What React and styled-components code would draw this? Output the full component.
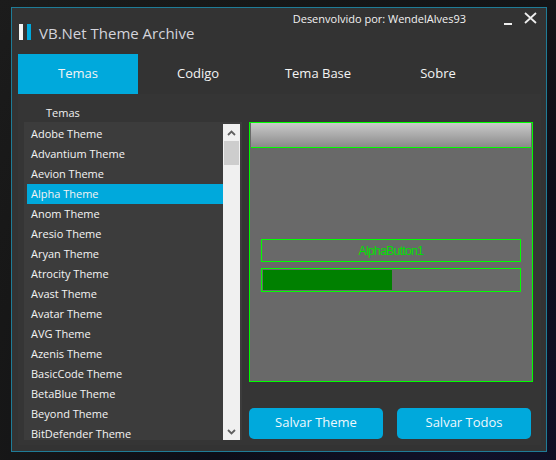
import React from 'react';
import styled, { createGlobalStyle } from 'styled-components';

const GlobalStyle = createGlobalStyle`
  html, body {
    margin: 0;
    padding: 0;
  }
  body {
    width: 556px;
    height: 460px;
    overflow: hidden;
    background: radial-gradient(circle at 85% 95%, #10112a 0%, #0c0d18 40%, #171717 75%, #1c1c1c 100%);
    font-family: "Open Sans", "Noto Sans", sans-serif;
  }
`;

const Desktop = styled.div`
  width: 556px;
  height: 460px;
  padding: 7px 0 0 11px;
  box-sizing: border-box;
`;

const Window = styled.div`
  width: 536px;
  height: 445px;
  box-sizing: border-box;
  border: 1px solid #1f7c97;
  background: #333333;
  display: flex;
  flex-direction: column;
`;

const TitleBar = styled.div`
  height: 46px;
  display: flex;
  align-items: flex-start;
  padding: 0 9px 0 7px;
`;

const Brand = styled.div`
  flex: 1;
  display: flex;
  align-items: center;
  margin-top: 15px;
  height: 18px;
`;

const Bar = styled.span`
  width: 4px;
  height: 16px;
  background: ${p => p.$color};
  margin-right: ${p => p.$gap}px;
`;

const Title = styled.span`
  color: #d4d4dc;
  font-size: 15px;
  letter-spacing: 0;
  margin-left: 3px;
  position: relative;
  top: 1px;
`;

const Credit = styled.span`
  color: #f2f2f2;
  font-size: 11px;
  margin-top: 3px;
  letter-spacing: 0;
`;

const Controls = styled.div`
  display: flex;
  align-items: flex-start;
  margin-left: 38px;
  margin-top: 4px;
  gap: 12px;
`;

const Minimize = styled.span`
  width: 8px;
  height: 2px;
  background: #eeeeee;
  margin-top: 11px;
`;

const TabRow = styled.div`
  display: flex;
  height: 40px;
  padding-left: 6px;
`;

const Tab = styled.div`
  width: 120px;
  display: flex;
  align-items: center;
  justify-content: center;
  padding-bottom: 3px;
  box-sizing: border-box;
  font-size: 13px;
  color: #f4f4f4;
  background: ${p => (p.$active ? '#00a9dc' : 'transparent')};
`;

const TabPage = styled.div`
  margin: 0 5px 6px 6px;
  flex: 1;
  background: #353535;
  display: flex;
  padding: 0 8px 0 6px;
  gap: 7px;
`;

const LeftColumn = styled.div`
  display: flex;
  flex-direction: column;
`;

const Label = styled.div`
  height: 28px;
  box-sizing: border-box;
  padding: 12px 0 0 22px;
  font-size: 11px;
  color: #f0f0f0;
  line-height: 14px;
`;

const ListBox = styled.div`
  width: 218px;
  height: 318px;
  background: #3c3c3c;
  display: flex;
  overflow: hidden;
`;

const Items = styled.div`
  flex: 1;
  padding: 2px 0 0 3px;
`;

const Item = styled.div`
  height: 20px;
  line-height: 19px;
  padding-left: 4px;
  font-size: 11px;
  color: #f4f4f4;
  white-space: nowrap;
  background: ${p => (p.$selected ? '#00a9dc' : 'transparent')};
`;

const ScrollTrack = styled.div`
  width: 17px;
  margin: 2px 2px 0 0;
  background: #f0f0f0;
  display: flex;
  flex-direction: column;
  align-items: center;
`;

const ScrollArrow = styled.div`
  height: 17px;
  display: flex;
  align-items: center;
  justify-content: center;
`;

const Thumb = styled.div`
  width: 15px;
  height: 24px;
  background: #cdcdcd;
`;

const Spacer = styled.div`
  flex: 1;
`;

const RightColumn = styled.div`
  display: flex;
  flex-direction: column;
  padding-top: 28px;
`;

const Panel = styled.div`
  width: 284px;
  height: 260px;
  box-sizing: border-box;
  border: 1px solid #00ff00;
  background: #696969;
  display: flex;
  flex-direction: column;
  padding: 0 1px;
`;

const PanelHeader = styled.div`
  height: 24px;
  background: linear-gradient(#cacaca, #8a8a8a);
  border-bottom: 1px solid #00ff00;
`;

const PanelBody = styled.div`
  flex: 1;
  display: flex;
  flex-direction: column;
  padding: 91px 10px 0;
  gap: 6px;
`;

const AlphaButton = styled.div`
  height: 23px;
  box-sizing: border-box;
  border: 1px solid #00ff00;
  display: flex;
  align-items: center;
  justify-content: center;
  color: #00e000;
  font-family: "Liberation Sans", Arial, sans-serif;
  font-size: 12px;
  letter-spacing: -0.6px;
`;

const Progress = styled.div`
  height: 24px;
  box-sizing: border-box;
  border: 1px solid #00ff00;
  padding: 1px 0 1px 1px;
  display: flex;
`;

const ProgressFill = styled.div`
  background: #008000;
`;

const Actions = styled.div`
  display: flex;
  gap: 14px;
  margin-top: 26px;
`;

const ActionButton = styled.div`
  width: 134px;
  height: 31px;
  box-sizing: border-box;
  padding-bottom: 3px;
  border-radius: 5px;
  background: #00a9dc;
  color: #eef8fc;
  font-size: 13px;
  display: flex;
  align-items: center;
  justify-content: center;
`;

const Chevron = ({ up }) => (
  <svg width="9" height="6" viewBox="0 0 9 6">
    <path
      d={up ? 'M1 5 L4.5 1.5 L8 5' : 'M1 1 L4.5 4.5 L8 1'}
      fill="none"
      stroke="#606060"
      strokeWidth="1.8"
    />
  </svg>
);

const themes = [
  'Adobe Theme', 'Advantium Theme', 'Aevion Theme', 'Alpha Theme', 'Anom Theme',
  'Aresio Theme', 'Aryan Theme', 'Atrocity Theme', 'Avast Theme', 'Avatar Theme',
  'AVG Theme', 'Azenis Theme', 'BasicCode Theme', 'BetaBlue Theme', 'Beyond Theme',
  'BitDefender Theme',
];

const tabs = ['Temas', 'Codigo', 'Tema Base', 'Sobre'];

export default function App() {
  return (
    <>
      <GlobalStyle />
      <Desktop>
        <Window>
          <TitleBar>
            <Brand>
              <Bar $color="#f4f4f4" $gap={4} />
              <Bar $color="#00a9dc" $gap={5} />
              <Title>VB.Net Theme Archive</Title>
            </Brand>
            <Credit>Desenvolvido por: WendelAlves93</Credit>
            <Controls>
              <Minimize />
              <svg width="13" height="12" viewBox="0 0 13 12">
                <path d="M1 1 L12 11 M12 1 L1 11" stroke="#eeeeee" strokeWidth="1.8" />
              </svg>
            </Controls>
          </TitleBar>
          <TabRow>
            {tabs.map((t, i) => (
              <Tab key={t} $active={i === 0}>{t}</Tab>
            ))}
          </TabRow>
          <TabPage>
            <LeftColumn>
              <Label>Temas</Label>
              <ListBox>
                <Items>
                  {themes.map(t => (
                    <Item key={t} $selected={t === 'Alpha Theme'}>{t}</Item>
                  ))}
                </Items>
                <ScrollTrack>
                  <ScrollArrow><Chevron up /></ScrollArrow>
                  <Thumb />
                  <Spacer />
                  <ScrollArrow><Chevron /></ScrollArrow>
                </ScrollTrack>
              </ListBox>
            </LeftColumn>
            <RightColumn>
              <Panel>
                <PanelHeader />
                <PanelBody>
                  <AlphaButton>AlphaButton1</AlphaButton>
                  <Progress>
                    <ProgressFill style={{ width: '50%' }} />
                  </Progress>
                </PanelBody>
              </Panel>
              <Actions>
                <ActionButton>Salvar Theme</ActionButton>
                <ActionButton>Salvar Todos</ActionButton>
              </Actions>
            </RightColumn>
          </TabPage>
        </Window>
      </Desktop>
    </>
  );
}
